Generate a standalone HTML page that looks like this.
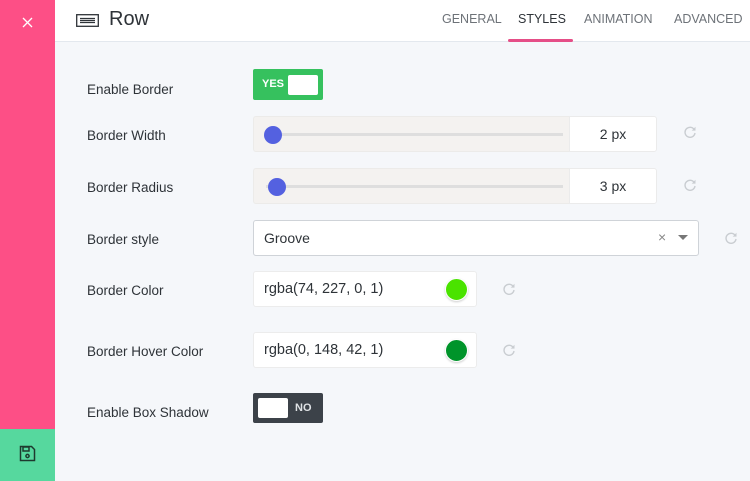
<!DOCTYPE html>
<html><head><style>
*{box-sizing:border-box;margin:0;padding:0}
body{width:750px;height:481px;overflow:hidden;background:#f5f7fa;font-family:"Liberation Sans",sans-serif;color:#2e3338;position:relative}
.abs{position:absolute}
.side{left:0;top:0;width:55px;height:429px;background:#fd4f86}
.save{left:0;top:429px;width:55px;height:52px;background:#56d89e}
.head{left:55px;top:0;width:695px;height:42px;background:#fff;border-bottom:1px solid #e3e8ee}
.tab{top:12px;font-size:12.5px;color:#6d7278}
.lbl{left:87px;font-size:13.5px;color:#2e3338}
.slider{left:253px;width:316px;height:36px;background:#f4f2f0;border:1px solid #ecebe9;border-right:none;border-radius:3px 0 0 3px}
.track{position:absolute;left:12px;right:6px;top:16px;height:3px;background:#dedede}
.knob{position:absolute;top:9px;width:18px;height:18px;border-radius:50%;background:#5461e0}
.num{left:569px;width:88px;height:36px;background:#fff;border:1px solid #ebebeb;border-radius:0 3px 3px 0;font-size:14px;text-align:center;line-height:34px}
.color{left:253px;width:224px;height:36px;background:#fff;border:1px solid #ececec;border-radius:3px;font-size:14.5px;line-height:34px;padding-left:10px}
.dot{position:absolute;right:8px;top:6px;width:23px;height:23px;border-radius:50%;box-shadow:0 1px 2px rgba(0,0,0,.2);border:1px solid #fff}
</style></head><body>
<svg width="0" height="0" style="position:absolute"><defs><symbol id="r" viewBox="0 0 14 14"><path d="M11.5 5A5 5 0 1 0 12 8" fill="none" stroke="#c9cdd1" stroke-width="1.4"/><path d="M12.5 1.8v3.8H8.7z" fill="#c9cdd1"/></symbol></defs></svg>
<div class="abs side"></div>
<svg class="abs" style="left:22px;top:17px" width="11" height="11" viewBox="0 0 11 11" stroke="#fff" stroke-width="1.3"><path d="M1 1l9 9M10 1l-9 9"/></svg>
<div class="abs save"></div>
<svg class="abs" style="left:19px;top:445px" width="17" height="17" viewBox="0 0 17 17" fill="none" stroke="#1e3a2e" stroke-width="1.5"><path d="M1.5 1.5h11l3 3v11h-14z"/><rect x="4" y="2" width="6" height="4"/><circle cx="8.5" cy="11" r="1.6"/></svg>
<div class="abs head"></div>
<svg class="abs" style="left:76px;top:14px" width="23" height="13" viewBox="0 0 23 13" fill="none" stroke="#2e3338" stroke-width="1.3"><rect x="0.7" y="0.7" width="21.6" height="11.6"/><path d="M4 4.5h15M4 6.5h15M4 8.5h15"/></svg>
<div class="abs" style="left:109px;top:8px;font-size:20px;color:#2e3338">Row</div>
<div class="abs tab" style="left:442px">GENERAL</div>
<div class="abs tab" style="left:518px;color:#2e3338">STYLES</div>
<div class="abs tab" style="left:584px">ANIMATION</div>
<div class="abs tab" style="left:674px">ADVANCED</div>
<div class="abs" style="left:508px;top:39px;width:65px;height:3px;background:#e54e87;border-radius:2px"></div>

<div class="abs lbl" style="top:82px">Enable Border</div>
<div class="abs" style="left:253px;top:69px;width:70px;height:31px;background:#36c15e;border-radius:2px"></div>
<div class="abs" style="left:262px;top:78px;color:#fff;font-size:11px;font-weight:bold">YES</div>
<div class="abs" style="left:288px;top:75px;width:30px;height:20px;background:#fff;border-radius:2px"></div>

<div class="abs lbl" style="top:128px">Border Width</div>
<div class="abs slider" style="top:116px"><div class="track"></div><div class="knob" style="left:10px"></div></div>
<div class="abs num" style="top:116px">2 px</div>
<svg class="abs" style="left:683px;top:125px" width="14" height="14"><use href="#r"/></svg>

<div class="abs lbl" style="top:180px">Border Radius</div>
<div class="abs slider" style="top:168px"><div class="track"></div><div class="knob" style="left:14px"></div></div>
<div class="abs num" style="top:168px">3 px</div>
<svg class="abs" style="left:683px;top:178px" width="14" height="14"><use href="#r"/></svg>

<div class="abs lbl" style="top:232px">Border style</div>
<div class="abs" style="left:253px;top:220px;width:446px;height:36px;background:#fff;border:1px solid #cfd3d8;border-radius:3px;font-size:14px;line-height:34px;padding-left:10px">Groove</div>
<div class="abs" style="left:658px;top:229px;color:#888;font-size:14px">×</div>
<div class="abs" style="left:678px;top:235px;width:0;height:0;border-left:5px solid transparent;border-right:5px solid transparent;border-top:5px solid #777"></div>
<svg class="abs" style="left:724px;top:231px" width="14" height="14"><use href="#r"/></svg>

<div class="abs lbl" style="top:283px">Border Color</div>
<div class="abs color" style="top:271px">rgba(74, 227, 0, 1)<div class="dot" style="background:#4ae300"></div></div>
<svg class="abs" style="left:502px;top:282px" width="14" height="14"><use href="#r"/></svg>

<div class="abs lbl" style="top:344px">Border Hover Color</div>
<div class="abs color" style="top:332px">rgba(0, 148, 42, 1)<div class="dot" style="background:#00942a"></div></div>
<svg class="abs" style="left:502px;top:343px" width="14" height="14"><use href="#r"/></svg>

<div class="abs lbl" style="top:405px">Enable Box Shadow</div>
<div class="abs" style="left:253px;top:393px;width:70px;height:30px;background:#3c4249;border-radius:2px"></div>
<div class="abs" style="left:258px;top:398px;width:30px;height:20px;background:#fff;border-radius:2px"></div>
<div class="abs" style="left:295px;top:402px;color:#dfe2e5;font-size:11px;font-weight:bold">NO</div>
</body></html>
